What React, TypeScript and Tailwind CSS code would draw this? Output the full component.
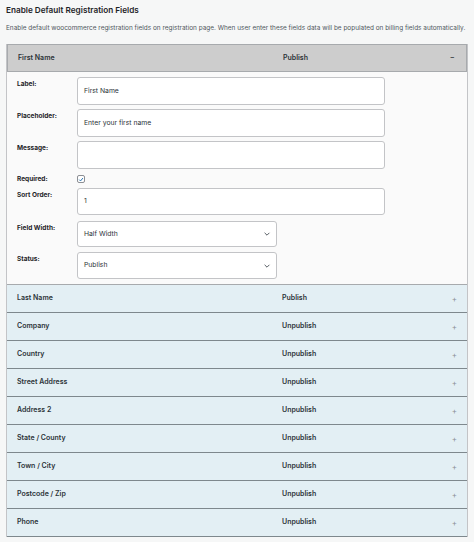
import React from 'react';

const rows: { name: string; status: string }[] = [
  { name: 'Last Name', status: 'Publish' },
  { name: 'Company', status: 'Unpublish' },
  { name: 'Country', status: 'Unpublish' },
  { name: 'Street Address', status: 'Unpublish' },
  { name: 'Address 2', status: 'Unpublish' },
  { name: 'State / County', status: 'Unpublish' },
  { name: 'Town / City', status: 'Unpublish' },
  { name: 'Postcode / Zip', status: 'Unpublish' },
  { name: 'Phone', status: 'Unpublish' },
];

const Chevron = () => (
  <svg width="8" height="8" viewBox="0 0 10 10" className="text-[#50575e]">
    <path d="M2 3.5 L5 6.5 L8 3.5" fill="none" stroke="currentColor" strokeWidth="1.2" />
  </svg>
);

const FieldRow: React.FC<{ label: string; children: React.ReactNode; className?: string }> = ({ label, children, className }) => (
  <div className={`flex ${className ?? ''}`}>
    <div className="w-[60px] pt-[3px] text-[6.5px] leading-[8px] font-bold text-[#1d2327]">{label}</div>
    {children}
  </div>
);

export default function App() {
  return (
    <div className="min-h-[542px] w-[474px] bg-[#f6f7f7] font-['Inter',sans-serif] text-[#3c434a]">
      <div className="px-[6px] pt-[4px]">
        <h2 className="text-[8.2px] font-semibold leading-[12px] text-[#1d2327]">Enable Default Registration Fields</h2>
        <p className="mt-[8px] text-[6.45px] leading-[9px] text-[#50575e] whitespace-nowrap">
          Enable default woocommerce registration fields on registration page. When user enter these fields data will be populated on billing fields automatically.
        </p>

        <div className="mt-[11px] border-x border-[#c3c4c7]">
          <div className="flex h-[28px] items-center border border-[#a7aaad] bg-[#cdcdcd] pl-[10px] pr-[12px] text-[7px] font-semibold text-[#2c3338]">
            <span className="w-[265px]">First Name</span>
            <span className="flex-1">Publish</span>
            <span>–</span>
          </div>

          <div className="bg-[#fafafa] pl-[10px] pt-[5px] pb-[5px]">
            <FieldRow label="Label:">
              <div className="flex h-[28px] w-[308px] items-center rounded-[3px] border border-[#c3c4c7] bg-white pl-[6px] text-[6.8px] text-[#2c3338]">First Name</div>
            </FieldRow>
            <FieldRow label="Placeholder:" className="mt-[4px]">
              <div className="flex h-[28px] w-[308px] items-center rounded-[3px] border border-[#c3c4c7] bg-white pl-[6px] text-[6.8px] text-[#2c3338]">Enter your first name</div>
            </FieldRow>
            <FieldRow label="Message:" className="mt-[4px]">
              <div className="h-[28px] w-[308px] rounded-[3px] border border-[#c3c4c7] bg-white" />
            </FieldRow>
            <div className="mt-[6px] flex h-[8px] items-center">
              <div className="w-[60px] text-[6.5px] leading-[8px] font-bold text-[#1d2327]">Required:</div>
              <div className="flex h-[8px] w-[8px] items-center justify-center rounded-[2px] border border-[#8c8f94] bg-white">
                <svg width="7" height="7" viewBox="0 0 10 10">
                  <path d="M2 5.2 L4.2 7.4 L8.2 2.6" fill="none" stroke="#2271b1" strokeWidth="1.6" />
                </svg>
              </div>
            </div>
            <FieldRow label="Sort Order:" className="mt-[5px]">
              <div className="flex h-[27px] w-[308px] items-center rounded-[3px] border border-[#c3c4c7] bg-white pl-[6px] text-[6.8px] text-[#2c3338]">1</div>
            </FieldRow>
            <FieldRow label="Field Width:" className="mt-[6px]">
              <div className="flex h-[26px] w-[200px] items-center justify-between rounded-[3px] border border-[#c3c4c7] bg-white pl-[6px] pr-[5px] text-[6.8px] text-[#2c3338]">
                <span>Half Width</span>
                <Chevron />
              </div>
            </FieldRow>
            <FieldRow label="Status:" className="mt-[5px]">
              <div className="flex h-[27px] w-[200px] items-center justify-between rounded-[3px] border border-[#c3c4c7] bg-white pl-[6px] pr-[5px] text-[6.8px] text-[#2c3338]">
                <span>Publish</span>
                <Chevron />
              </div>
            </FieldRow>
          </div>

          <div className="border-t border-[#a7aaad]">
            {rows.map((r) => (
              <div
                key={r.name}
                className="flex h-[28px] items-center border-b border-[#7e888d] bg-[#e3eff4] pl-[10px] pr-[10px] text-[7px] font-semibold text-[#2c3338]"
              >
                <span className="w-[265px]">{r.name}</span>
                <span className="flex-1">{r.status}</span>
                <span className="text-[8px] font-normal text-[#8c8f94]">+</span>
              </div>
            ))}
          </div>
        </div>
      </div>
    </div>
  );
}
